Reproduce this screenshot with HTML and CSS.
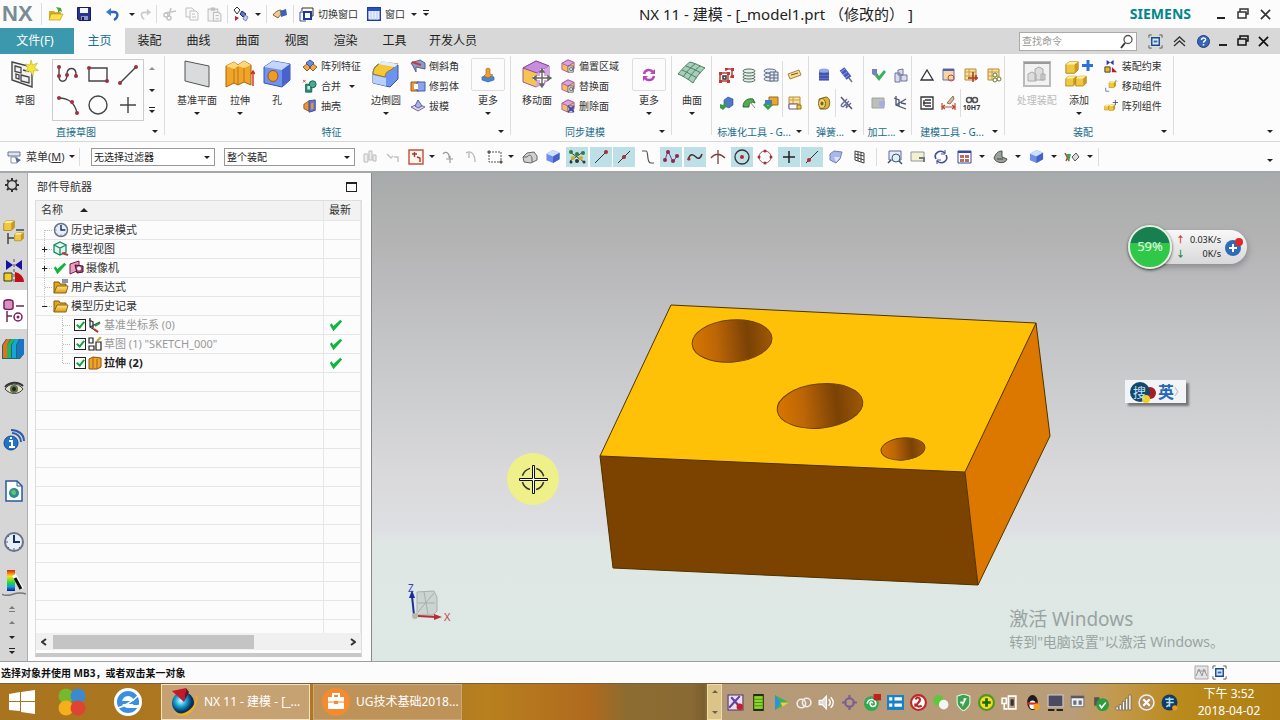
FILE: index.html
```html
<!DOCTYPE html>
<html lang="zh-CN">
<head>
<meta charset="utf-8">
<title>NX 11 - 建模</title>
<link rel="stylesheet" href="styles.css">
</head>
<body>
<svg class="defs" width="0" height="0" aria-hidden="true">
  <defs>
    <linearGradient id="gHole" x1="0" x2="1" y1="0" y2="0"><stop offset="0" stop-color="#d87600"/><stop offset=".3" stop-color="#bd6606"/><stop offset=".6" stop-color="#8a4a06"/><stop offset=".7" stop-color="#7a4204"/><stop offset="1" stop-color="#a05806"/></linearGradient>
    <linearGradient id="gFolder" x1="0" x2="0" y1="0" y2="1"><stop offset="0" stop-color="#ffe680"/><stop offset="1" stop-color="#d99a18"/></linearGradient>
    <linearGradient id="gRain" x1="0" x2="0" y1="0" y2="1"><stop offset="0" stop-color="#e02010"/><stop offset=".3" stop-color="#f8e020"/><stop offset=".6" stop-color="#20d840"/><stop offset=".8" stop-color="#10a0d0"/><stop offset="1" stop-color="#1010b0"/></linearGradient>
    <radialGradient id="gNx" cx=".4" cy=".4"><stop offset="0" stop-color="#d8ffff"/><stop offset=".5" stop-color="#18a8d8"/><stop offset="1" stop-color="#043060"/></radialGradient>
  </defs>
  <symbol id="cube" viewBox="0 0 16 16"><path d="M1 5l7-4 7 3v7l-7 4-7-3z" fill="#6d8fe8"/><path d="M1 5l7-4 7 3-7 4z" fill="#cfe0ff"/><path d="M8 8l7-4v7l-7 4z" fill="#4560c8"/></symbol>
  <symbol id="ycube" viewBox="0 0 16 16"><path d="M1 4l4-3h10v9l-4 4H1z" fill="#f0c840" stroke="#a87c10"/><path d="M1 4l4-3h10l-4 3z" fill="#fff0a0"/><path d="M11 4l4-3v9l-4 4z" fill="#c89820"/></symbol>
  <symbol id="tick" viewBox="0 0 16 16"><path d="M1 8l4 7L15 4l-2-2-8 7-2-3z" fill="#12b53c"/></symbol>
  <symbol id="pface" viewBox="0 0 16 16"><path d="M1 5l7-4 7 3v7l-7 4-7-3z" fill="#f7b96a" stroke="#a65c9a"/><path d="M1 5l7-4 7 3-7 4z" fill="#d9a2de" stroke="#a65c9a"/><path d="M8 8h6v7H8z" fill="#fff" stroke="#555"/><path d="M10 10h3v3h-3z" fill="none" stroke="#555"/></symbol>
  <symbol id="clock" viewBox="0 0 22 22"><circle cx="11" cy="11" r="9" fill="#e8eef8" stroke="#6a7486" stroke-width="2"/><path d="M11 4v7h6" fill="none" stroke="#16305a" stroke-width="2"/><path d="M11 17v2M3 11h2M5 5l1 1M5 17l1-1M17 17l-1-1" stroke="#59657c"/></symbol>
  <symbol id="folder" viewBox="0 0 16 16"><path d="M1 14V3h5l1 2h6v3" fill="#e3a51c" stroke="#7c5a10"/><path d="M1 14l3-7h11l-2 7z" fill="url(#gFolder)" stroke="#8a6414"/></symbol>
  <symbol id="restore" viewBox="0 0 12 12"><path d="M3 4V1h8v5H9M1 4h8v6H1z" fill="none" stroke="currentColor" stroke-width="1.5"/></symbol>
  <symbol id="close" viewBox="0 0 12 12"><path d="M1 1l10 10M11 1L1 11" fill="none" stroke="currentColor" stroke-width="1.8"/></symbol>
  <symbol id="sheet" viewBox="0 0 16 16"><path d="M2 2h11v11H2z" fill="#fbe29a" stroke="#b58a3a"/><path d="M2 5h11M2 9h11M6 2v11" stroke="#c79c4e"/></symbol>
  <symbol id="fit" viewBox="0 0 16 16"><path d="M1 4V1h3M12 1h3v3M15 12v3h-3M4 15H1v-3" fill="none" stroke="#555"/><path d="M4 4h8v8H4z" fill="#d8e8fa" stroke="#174a88" stroke-width="1.5"/><path d="M6 7h4v2H6z" fill="#2f6db5"/></symbol>
</svg>

<header class="titlebar">
  <span class="logo">NX</span>
  <button class="ib w28" aria-label="打开"><svg width="16" height="16" viewBox="0 0 16 16"><path d="M1 13V5h5l1 1h6v7z" fill="#d9ab1f"/><path d="M3 8h12l-3 6H1z" fill="#ffe14d" stroke="#b48c10" stroke-width=".6"/><path d="M8 1l5 1 1 4-2-1-2 2V4z" fill="#48a53a"/></svg></button>
  <button class="ib w28" aria-label="保存"><svg width="14" height="14" viewBox="0 0 14 14"><path d="M.5.5h13v13H2L.5 12z" fill="#27358f" stroke="#141d5c"/><path d="M3 1h8v5H3z" fill="#f5f7ff"/><path d="M4 9h7v4H4z" fill="#8f97c0"/><path d="M5 10h2v3H5z" fill="#111a55"/></svg></button>
  <button class="ib w28" aria-label="撤消"><svg width="14" height="14" viewBox="0 0 14 14"><path d="M4 5h5c5 0 4 6 0 8" fill="none" stroke="#2f63b8" stroke-width="2.4"/><path d="M1 5l5-4v8z" fill="#2f7fd0"/></svg></button>
  <i class="caret"></i>
  <button class="ib w16" aria-label="重做" disabled><svg width="12" height="12" viewBox="0 0 14 14"><path d="M10 5H5C0 5 1 11 5 13" fill="none" stroke="#ccc" stroke-width="2"/><path d="M13 5L8 1v8z" fill="#ccc"/></svg></button>
  <i class="sep"></i>
  <button class="ib w22" aria-label="剪切" disabled><svg width="14" height="14" viewBox="0 0 14 14" fill="none" stroke="#c4c4c4" stroke-width="1.5"><path d="M8 1L6 9M2 6l11-2"/><circle cx="3" cy="8" r="2"/><circle cx="6" cy="11" r="2"/></svg></button>
  <button class="ib w22" aria-label="复制" disabled><svg width="14" height="14" viewBox="0 0 14 14" fill="#fafafa" stroke="#c0c0c0"><path d="M1 1h6l2 2v7H1z"/><path d="M5 4h6l2 2v7H5zM7 7h3M7 10h4"/></svg></button>
  <button class="ib w22" aria-label="粘贴" disabled><svg width="15" height="15" viewBox="0 0 14 14" fill="#f4f4f4" stroke="#c0c0c0"><path d="M1 2h9v11H1zM4 1h3v2H4z"/><path d="M6 5h5l2 2v6H6zM8 8h3M8 11h3"/></svg></button>
  <i class="sep"></i>
  <button class="ib w22" aria-label="最近命令"><svg width="16" height="16" viewBox="0 0 16 16"><path d="M4 1l3 3-3 4-3-4z" fill="#fff" stroke="#333"/><path d="M9 5l4 3-3 3-3-3z" fill="#5f6fd0" stroke="#222a7a"/><path d="M12 9l3 2-2 4-3-2z" fill="#c7d2f0" stroke="#7b88b8"/><path d="M2 10l4 2-4 3z" fill="#c8202a"/></svg></button>
  <i class="caret"></i>
  <i class="sep"></i>
  <button class="ib w22" aria-label="触控"><svg width="16" height="12" viewBox="0 0 16 12"><path d="M1 7c2-3 5-5 8-5l1 3-4 5z" fill="#f2c888" stroke="#8c6434"/><path d="M8 3l6-2 1 6-6 2z" fill="#3a62b4"/></svg></button>
  <i class="sep"></i>
  <button class="tb"><svg width="15" height="15" viewBox="0 0 15 15" fill="#fff"><path d="M3 4V1h11v8h-2" stroke="#333"/><path d="M1 5h6M1 5v9h6" stroke="#3a4bb0" fill="none"/><path d="M5 5h7v7H5z" stroke="#1c3c9c" stroke-width="2"/></svg>切换窗口</button>
  <button class="tb"><svg width="14" height="14" viewBox="0 0 14 14"><path d="M.7.7h12.6v12.6H.7z" fill="#e8f0ff" stroke="#1c3ca8" stroke-width="1.4"/><path d="M1 1h12v3H1z" fill="#2a52c8"/><path d="M4 4v9M7 4v9M10 4v9" stroke="#b5c6ec"/></svg>窗口</button>
  <i class="caret"></i><i class="caret bar"></i>
  <h1 class="doc-title">NX 11 - 建模 - [_model1.prt （修改的） ]</h1>
  <span class="brand">SIEMENS</span>
  <span class="winbtns">
    <button class="ib w22" aria-label="最小化"><i class="min"></i></button>
    <button class="ib w22" aria-label="还原"><svg width="12" height="12"><use href="#restore"/></svg></button>
    <button class="ib w22" aria-label="关闭"><svg width="11" height="11"><use href="#close"/></svg></button>
  </span>
</header>

<nav class="tabs">
  <button class="tab file">文件(F)</button>
  <button class="tab on">主页</button>
  <button class="tab">装配</button>
  <button class="tab">曲线</button>
  <button class="tab">曲面</button>
  <button class="tab">视图</button>
  <button class="tab">渲染</button>
  <button class="tab">工具</button>
  <button class="tab wide">开发人员</button>
  <label class="search"><input type="text" placeholder="查找命令" aria-label="查找命令"><svg width="15" height="15" viewBox="0 0 15 15" fill="none"><circle cx="9" cy="5.500" r="4" stroke="#555" stroke-width="1.300"/><path d="M6 9l-4 5" stroke="#333" stroke-width="2"/></svg></label>
  <span class="tabicons">
    <button class="ib w24" aria-label="全屏"><svg width="15" height="15"><use href="#fit"/></svg></button>
    <button class="ib w24" aria-label="折叠功能区"><svg width="13" height="11" viewBox="0 0 13 11" fill="none" stroke="#333" stroke-width="1.300"><path d="M1 6l5.500-5L12 6M1 10l5.500-5L12 10"/></svg></button>
    <button class="ib w24" aria-label="帮助"><svg width="13" height="13" viewBox="0 0 13 13"><circle cx="6.500" cy="6.500" r="6" fill="#3566b8" stroke="#1d3f80"/><path d="M4.500 5c0-3 4.500-2.500 4 0-.4 1.200-2 1.300-2 2.800M6.500 9v1.500" fill="none" stroke="#fff" stroke-width="1.500"/></svg></button>
    <button class="ib w16" aria-label="最小化文档"><i class="min"></i></button>
    <button class="ib w24" aria-label="还原文档"><svg width="12" height="12"><use href="#restore"/></svg></button>
    <button class="ib w16" aria-label="关闭文档"><svg width="11" height="11"><use href="#close"/></svg></button>
  </span>
</nav>

<section class="ribbon">
  <div class="group g1">
    <div class="tools">
      <button class="big"><svg width="28" height="28" viewBox="0 0 28 28"><path d="M1 2l20 5v20L1 20z" fill="#f2f2f2" stroke="#444" stroke-width="1.400"/><path d="M4 6l6 1.500V13l-6-1.500zM12 10l6 1.500M5 14l3 1v4l-3-1zM10 15l8 2v6l-8-2z" fill="none" stroke="#444" stroke-width="1.300"/><path d="M20 0l1.500 5 5-2-3 4.500 4 3-5 .5L22 16l-3-5-5 1 3-4-3-4 5 1z" fill="#f4e53c" stroke="#b8b020" stroke-width=".6"/></svg><span>草图</span></button>
      <div class="gallery">
        <button aria-label="轮廓"><svg width="22" height="22" viewBox="0 0 22 22"><path d="M2 3v9c0 7 7 7 8 0V9c1-6 8-6 9 0v3" fill="none" stroke="#444" stroke-width="1.400"/><circle cx="2" cy="3" r="2" fill="#a03040"/><circle cx="2" cy="12" r="2" fill="#a03040"/><circle cx="10" cy="11" r="2" fill="#a03040"/><circle cx="19" cy="12" r="2" fill="#a03040"/></svg></button>
        <button aria-label="矩形"><svg width="22" height="22" viewBox="0 0 22 22"><path d="M2 4h18v13H2z" fill="none" stroke="#444" stroke-width="1.400"/><circle cx="2" cy="4" r="2" fill="#a03040"/><circle cx="20" cy="17" r="2" fill="#a03040"/></svg></button>
        <button aria-label="直线"><svg width="22" height="22" viewBox="0 0 22 22"><path d="M3 19L19 3" stroke="#444" stroke-width="1.400"/><circle cx="3" cy="19" r="2" fill="#a03040"/><circle cx="19" cy="3" r="2" fill="#a03040"/></svg></button>
        <button aria-label="圆弧"><svg width="22" height="22" viewBox="0 0 22 22"><path d="M2 4c9 0 16 5 18 15" fill="none" stroke="#444" stroke-width="1.400"/><circle cx="2" cy="4" r="2" fill="#a03040"/><circle cx="15" cy="8" r="2" fill="#a03040"/><circle cx="20" cy="19" r="2" fill="#a03040"/></svg></button>
        <button aria-label="圆"><svg width="22" height="22" viewBox="0 0 22 22"><circle cx="11" cy="11" r="9" fill="none" stroke="#444" stroke-width="1.400"/></svg></button>
        <button aria-label="点"><svg width="22" height="22" viewBox="0 0 22 22"><path d="M11 3v16M3 11h16" stroke="#444" stroke-width="1.400"/></svg></button>
      </div>
      <div class="scroll"><i class="caret up dim"></i><i class="caret"></i><i class="caret bar"></i></div>
    </div>
    <footer><span>直接草图</span><i class="caret"></i></footer>
  </div>

  <div class="group g2">
    <div class="tools">
      <button class="big w46"><svg width="28" height="28" viewBox="0 0 28 28"><path d="M2 1l24 5v21L2 21z" fill="#d9dcdc" stroke="#555"/></svg><span>基准平面</span><i class="caret"></i></button>
      <button class="big w40"><svg width="30" height="28" viewBox="0 0 30 28"><path d="M1 6l8-4 4 3 6-4 7 4v20l-7-3-6 3-4-2-8 4z" fill="#f0a428" stroke="#a86410"/><path d="M1 6l8-4 4 3 6-4 7 4-7 3-6-2-4 3z" fill="#ffd878"/><path d="M9 9v15M13 7v18M19 8v14" stroke="#b87818"/><path d="M28 26V12M26 14l2-3 2 3" fill="none" stroke="#d03018" stroke-width="1.400"/></svg><span>拉伸</span><i class="caret"></i></button>
      <button class="big w34"><svg width="28" height="28" viewBox="0 0 28 28"><path d="M1 7l9-6 17 3v16l-8 7-18-4z" fill="#6f92ee" stroke="#3c52a8"/><path d="M1 7l9-6 17 3-8 6z" fill="#c2d6ff"/><path d="M19 10l8-6v16l-8 7z" fill="#4a62cc"/><ellipse cx="10" cy="16" rx="5" ry="5.500" fill="#f09a28" stroke="#9c5810"/></svg><span>孔</span></button>
      <div class="stack">
        <button><svg width="16" height="14" viewBox="0 0 16 14"><path d="M1 8l4-3 4 3-4 4zM7 8l4-3 4 3-4 4z" fill="#f0a848" stroke="#995c1c"/><path d="M4 4l4-3 4 3-4 4z" fill="#6a8be0" stroke="#3b529c"/></svg>阵列特征</button>
        <button><svg width="16" height="16" viewBox="0 0 16 16"><path d="M3 6h7v9H3z" fill="#2f8f78" stroke="#145c4a"/><circle cx="11" cy="6" r="4" fill="#46ab90" stroke="#145c4a"/><path d="M5 8h3v4H5z" fill="#c8efe2"/><path d="M0 1l3 3M3 1L0 4" stroke="#d03030"/></svg>合并<i class="caret"></i></button>
        <button><svg width="16" height="16" viewBox="0 0 16 16"><path d="M1 6l6-4v12l-6-3z" fill="#e8943c" stroke="#9c5414"/><path d="M7 2l7-1v12l-7 2z" fill="#5a78d8" stroke="#34489c"/><path d="M9 5l3-1v7l-3 1z" fill="#e8943c"/></svg>抽壳</button>
      </div>
      <button class="big w36"><svg width="28" height="28" viewBox="0 0 28 28"><path d="M1 14c0-7 4-9 9-12l16 3v14l-8 8-17-4z" fill="#6f92ee" stroke="#3c52a8"/><path d="M10 2l16 2-7 6c-4 1-6 4-6 7L1 14C1 8 5 5 10 2z" fill="#f4c838" stroke="#9b7a18"/><path d="M10 1l16 3-3 3L6 4z" fill="#e0ecff"/><path d="M1 15l13 3v8L1 23z" fill="#b8d0ff"/></svg><span>边倒圆</span><i class="caret"></i></button>
      <div class="stack s54">
        <button><svg width="16" height="14" viewBox="0 0 16 14"><path d="M1 4l9-3 5 3v6L6 8v5L3 7z" fill="#8a9ccc" stroke="#565f80"/><path d="M2 3l9 3" stroke="#c43c3c" stroke-width="2"/></svg>倒斜角</button>
        <button><svg width="16" height="14" viewBox="0 0 16 14"><path d="M1 3h8v9H1z" fill="#e8983c" stroke="#9a5818"/><path d="M7 3h8v9H7z" fill="#8aa4e8" stroke="#475ca8"/><path d="M4 5h4v5H4z" fill="#fff"/></svg>修剪体</button>
        <button><svg width="16" height="14" viewBox="0 0 16 14"><path d="M1 8l7-3 7 3-7 4z" fill="#f0cce8" stroke="#6e6e9c"/><path d="M5 7l3-6 4 6-4 2z" fill="#a6b4e8" stroke="#56629c"/></svg>拔模</button>
      </div>
      <button class="big more"><span class="box"><svg width="16" height="16" viewBox="0 0 16 16"><path d="M2 10l5-2 7 2v3l-6 2-6-2z" fill="#4a86d0" stroke="#2c5c9c" stroke-width=".6"/><path d="M6 2l2-1 2 1v5l3 1-5 3-4-2 2-2z" fill="#f0a030" stroke="#a06010" stroke-width=".6"/></svg></span><span>更多</span><i class="caret"></i></button>
    </div>
    <footer><span>特征</span><i class="caret"></i></footer>
  </div>

  <div class="group g3">
    <div class="tools">
      <button class="big w46"><svg width="30" height="28" viewBox="0 0 30 28"><path d="M1 8l13-7 13 5v14l-13 7L1 22z" fill="#f6c450" stroke="#9a5c90"/><path d="M1 8l13-7 13 5-12 7z" fill="#c88ce0" stroke="#8a4c9c"/><path d="M15 13l12-7v14l-13 7z" fill="#d8a4e4"/><path d="M20 9v18M11 18h18" stroke="#fff" stroke-width="4"/><path d="M20 9v18M11 18h18M20 9l-2 3h4zM20 27l-2-3h4zM11 18l3-2v4zM29 18l-3-2v4z" fill="#666" stroke="#666" stroke-width="1.400"/></svg><span>移动面</span></button>
      <div class="stack s66">
        <button><svg width="16" height="14"><use href="#pface"/></svg>偏置区域</button>
        <button><svg width="16" height="14"><use href="#pface"/></svg>替换面</button>
        <button><svg width="16" height="14" viewBox="0 0 16 14"><use href="#pface" width="16" height="14"/><path d="M8 7l6 6M14 7l-6 6" stroke="#3a46b8" stroke-width="1.500"/></svg>删除面</button>
      </div>
      <button class="big more"><span class="box"><svg width="16" height="16" viewBox="0 0 16 16" fill="none" stroke="#b44ab8" stroke-width="2.400"><path d="M3 7c1-5 7-5 9-2M13 9c-1 5-7 5-9 2"/><path d="M14 2v5H9zM2 14V9h5z" fill="#b44ab8" stroke="none"/></svg></span><span>更多</span><i class="caret"></i></button>
    </div>
    <footer><span>同步建模</span><i class="caret"></i></footer>
  </div>

  <div class="group g4">
    <div class="tools">
      <button class="big w40"><svg width="30" height="28" viewBox="0 0 30 28"><path d="M1 14C6 8 10 4 13 2c5 1 10 4 15 6-4 3-8 8-12 15C11 19 6 16 1 14z" fill="#a5cfb8" stroke="#507c66"/><path d="M5 10c5 2 10 5 15 8M9 6c5 2 10 4 15 7M6 17C10 11 14 7 18 4M11 20c4-7 8-11 12-14" fill="none" stroke="#507c66"/></svg><span>曲面</span><i class="caret"></i></button>
    </div>
  </div>

  <div class="group g5">
    <div class="tools grid4">
      <button aria-label="标准件"><svg width="16" height="16" viewBox="0 0 16 16" fill="none" stroke="#c03838" stroke-width="1.500"><path d="M1 6h8v8H1z"/><path d="M4 9h3v3H4z" stroke="#333"/><path d="M7 4V2h6v8h-2" stroke="#a84848"/><g fill="#c03838" stroke="none"><path d="M0 5h3v3H0zM8 5h3v3H8zM0 13h3v3H0zM8 13h3v3H8zM6 1h3v2H6zM12 1h3v3h-3zM12 8h3v3h-3z"/></g></svg></button>
      <button aria-label="图层"><svg width="16" height="16" viewBox="0 0 16 16" fill="#e6efe8" stroke="#4b6b5a"><ellipse cx="8" cy="13" rx="6" ry="2"/><ellipse cx="8" cy="10" rx="6" ry="2"/><ellipse cx="8" cy="7" rx="6" ry="2"/><ellipse cx="8" cy="4" rx="6" ry="2"/></svg></button>
      <button aria-label="图层表"><svg width="16" height="16" viewBox="0 0 16 16" fill="#e6ecf4" stroke="#5a6684"><ellipse cx="7" cy="12" rx="6" ry="2"/><ellipse cx="7" cy="8" rx="6" ry="2"/><ellipse cx="7" cy="4" rx="6" ry="2"/><path d="M7 5h8v9H7zM7 8h8M7 11h8M11 5v9"/></svg></button>
      <button class="split" aria-label="标签"><svg width="16" height="14" viewBox="0 0 16 14"><path d="M1 6l11-4 2 5-11 4z" fill="#f8dc94" stroke="#a8823c"/><path d="M4 7l7-2" stroke="#735420"/></svg></button>
      <button aria-label="导入"><svg width="16" height="16" viewBox="0 0 16 16"><path d="M5 5l4-3 5 2v6l-4 3-5-2z" fill="#4d78c8" stroke="#2c4c90" stroke-width=".6"/><path d="M1 9l3 1 3-3 1 4-4 4-3-2z" fill="#3b9a48"/></svg></button>
      <button aria-label="更新"><svg width="16" height="16" viewBox="0 0 16 16"><path d="M2 12c0-7 6-9 10-8l2 4c-4-2-6 0-6 4z" fill="#54ac50" stroke="#2b6b2b"/><path d="M9 7l5 6" stroke="#888"/></svg></button>
      <button aria-label="转换"><svg width="16" height="16" viewBox="0 0 16 16"><path d="M6 2h9v8H6z" fill="#e8a830" stroke="#9c6a18"/><path d="M2 5h7v5H2z" fill="#4a7ac0"/><path d="M1 9l4 4 4-4" stroke="#38a048" fill="none" stroke-width="3"/></svg></button>
      <button class="split" aria-label="属性"><svg width="16" height="16" viewBox="0 0 16 16"><use href="#sheet"/><path d="M2 9h9v5H2z" fill="#fff" stroke="#6c5088"/><path d="M10 10h4v4h-4z" fill="#f2c440" stroke="#93731c"/></svg></button>
    </div>
    <footer><span>标准化工具 - G...</span><i class="caret"></i></footer>
  </div>

  <div class="group g6">
    <div class="tools grid2">
      <button aria-label="圆柱弹簧"><svg width="14" height="14" viewBox="0 0 14 14"><path d="M2 2h10v10H2z" fill="#5c70c8"/><ellipse cx="7" cy="2.500" rx="5" ry="2" fill="#96a8ea"/><path d="M2 6h10M2 9h10M2 12h10" stroke="#2c3c90"/></svg></button>
      <button aria-label="拉伸弹簧"><svg width="16" height="16" viewBox="0 0 16 16"><path d="M4 2l7 9" stroke="#4a5cc0" stroke-width="6"/><path d="M3 5l4-3M5 8l4-3M7 11l4-3" stroke="#8c9ce4"/><path d="M11 11l3 4" stroke="#777" stroke-width="1.500"/></svg></button>
      <button aria-label="碟簧"><svg width="14" height="14" viewBox="0 0 14 14"><path d="M2 3l7-2c5 0 5 11 0 12H3z" fill="#d8b43c" stroke="#7c641c"/><ellipse cx="5" cy="7.500" rx="3.500" ry="5" fill="#f0d468" stroke="#7c641c"/><ellipse cx="5" cy="7.500" rx="1.500" ry="2" fill="#75601c"/></svg></button>
      <button class="split" aria-label="删除弹簧"><svg width="16" height="16" viewBox="0 0 16 16" fill="none"><path d="M2 2l11 12" stroke="#555" stroke-width="1.500"/><path d="M3 9l5-5M5 11l5-5M7 13l5-5M3 9c-2 2 1 4 2 2s4-1 2 2" stroke="#6a6ea8" stroke-width="1.500"/></svg></button>
    </div>
    <footer><span>弹簧...</span><i class="caret"></i></footer>
  </div>

  <div class="group g7">
    <div class="tools grid2">
      <button aria-label="检查"><svg width="16" height="16" viewBox="0 0 16 16"><path d="M1 2h5v5l-2 2-3-2z" fill="#7a7ec0"/><path d="M4 9l4 5 7-9-2-2-5 6-2-3z" fill="#3cb05c"/></svg></button>
      <button aria-label="加工设置"><svg width="16" height="16" viewBox="0 0 16 16" fill="#d8dcec" stroke="#70749c"><path d="M2 6h5v9H2zM5 3l5-1v6H5zM8 8h6v6H8z"/></svg></button>
      <button aria-label="毛坯"><svg width="16" height="16" viewBox="0 0 16 16"><path d="M1 3h12v10H1z" fill="#bcc0b8" stroke="#a0a49c"/><path d="M8 6h6v4l-3 3-3-3z" fill="#a8aaea"/></svg></button>
      <button aria-label="坐标"><svg width="16" height="16" viewBox="0 0 16 16" fill="none" stroke="#4c5870" stroke-width="1.300"><path d="M3 1v9l10 4M3 10l10-6M1 3l5 2v6M8 8l5 1"/></svg></button>
    </div>
    <footer><span>加工...</span><i class="caret"></i></footer>
  </div>

  <div class="group g8">
    <div class="tools grid4">
      <button aria-label="三角"><svg width="14" height="14" viewBox="0 0 14 14"><path d="M7 2l6 10H1z" fill="none" stroke="#333" stroke-width="1.300"/></svg></button>
      <button aria-label="表格"><svg width="14" height="14" viewBox="0 0 14 14"><path d="M1 1h11v11H1z" fill="#f4d8a4" stroke="#6c6ca8"/><path d="M1 2h11" stroke="#5860b0" stroke-width="2"/><circle cx="9" cy="10" r="3" fill="none" stroke="#c44c3c"/></svg></button>
      <button aria-label="插入列"><svg width="16" height="16" viewBox="0 0 16 16"><use href="#sheet"/><path d="M10 5v10M5 11h10M13 8v5" stroke="#a83828" stroke-width="1.500"/></svg></button>
      <button aria-label="编辑表"><svg width="16" height="16" viewBox="0 0 16 16"><use href="#sheet"/><g fill="#fff" stroke="#667a38"><circle cx="9" cy="8" r="2"/><circle cx="13" cy="12" r="2"/><circle cx="9" cy="13" r="2"/></g></svg></button>
      <button aria-label="公差框"><svg width="14" height="14" viewBox="0 0 14 14" fill="none" stroke="#333" stroke-width="1.300"><path d="M1 1h12v12H1zM5 4h6M3 7h8M5 10h6M4 4v6"/></svg></button>
      <button aria-label="尺寸"><svg width="16" height="16" viewBox="0 0 16 16"><path d="M6 8l6-7 1 3-4 5z" fill="#d6bc98" stroke="#8a7458"/><path d="M1 8v7M14 8v7M1 12h13M4 10l-3 2 3 2M11 10l3 2-3 2" fill="none" stroke="#c44638" stroke-width="1.200"/></svg></button>
      <button class="split h7" aria-label="配合"><svg width="14" height="8" viewBox="0 0 14 8" fill="none" stroke="#555" stroke-width="1.500"><circle cx="4" cy="4" r="2.500"/><circle cx="10" cy="4" r="2.500"/><path d="M6 1l3 6"/></svg><b>10H7</b></button>
    </div>
    <footer><span>建模工具 - G...</span><i class="caret"></i></footer>
  </div>

  <div class="group g9">
    <div class="tools">
      <button class="big w46" disabled><svg width="28" height="28" viewBox="0 0 28 28"><path d="M1 2h26v24H1z" fill="#f2f2f2" stroke="#bbb" stroke-width="2"/><path d="M1 3h26" stroke="#999" stroke-width="2"/><path d="M5 14l4-2 4 2v7H5zM12 9l4-2 4 2v11h-8zM18 14h4v6h-4z" fill="#ddd" stroke="#aaa"/></svg><span>处理装配</span></button>
      <button class="big w40"><svg width="28" height="28" viewBox="0 0 28 28"><use href="#ycube" width="14" height="14" y="1"/><use href="#ycube" width="12" height="13" y="15"/><use href="#ycube" width="12" height="13" x="10" y="15"/><path d="M23 0v11M17 5.500h11" stroke="#2b72d8" stroke-width="3"/></svg><span>添加</span><i class="caret"></i></button>
      <div class="stack s66 last">
        <button><svg width="16" height="16" viewBox="0 0 16 16"><path d="M3 1v6l4-3zM11 1v6L7 4z" fill="#3038b0"/><path d="M1 9h6v6H1z" fill="#e8b820" stroke="#333"/><path d="M9 9v6h6z" fill="#b81c28"/></svg>装配约束</button>
        <button><svg width="16" height="16" viewBox="0 0 16 16"><use href="#ycube" x="5" y="2" width="9" height="9"/><path d="M2 10v4h4M13 1l2 2" fill="none" stroke="#557bb4"/></svg>移动组件</button>
        <button><svg width="16" height="16" viewBox="0 0 16 16"><use href="#ycube" y="6" width="7" height="8"/><use href="#ycube" x="5" y="6" width="8" height="8"/><path d="M13 1v6M10 4h6" stroke="#3b4da0"/></svg>阵列组件</button>
      </div>
    </div>
    <footer><span>装配</span><i class="caret"></i></footer>
  </div>
  <div class="group gend"><footer><i class="caret"></i></footer></div>
</section>

<section class="selbar">
  <button class="tb menu"><svg width="16" height="16" viewBox="0 0 16 16"><path d="M1 3h12v4H1z" fill="#dfe5f0" stroke="#6b7590"/><path d="M4 8h6v6H4z" fill="#fff" stroke="#8a92a8"/><path d="M8 8l6 3-4 3z" fill="#5d6a90"/></svg><span>菜单(<u>M</u>)</span><i class="caret"></i></button>
  <i class="sep"></i>
  <span class="dd d1"><select aria-label="选择过滤器"><option>无选择过滤器</option></select><i class="caret"></i></span>
  <span class="dd d2"><select aria-label="选择范围"><option>整个装配</option></select><i class="caret"></i></span>
  <span class="run first">
    <button aria-label="选择"><svg width="16" height="16" viewBox="0 0 16 16" fill="#eee" stroke="#bbb"><path d="M2 5h4v8H2zM7 2h3v9H7zM11 6h3v6h-3z"/></svg></button>
    <button aria-label="取消选择"><svg width="16" height="16" viewBox="0 0 16 16" fill="none" stroke="#c2c2c2" stroke-width="1.400"><path d="M2 5l4 4 2-2M9 8h4v5"/></svg></button>
    <button aria-label="选择优先"><svg width="16" height="16" viewBox="0 0 16 16" fill="none" stroke="#c0503c"><path d="M1 1h14v14H1z" fill="#fff4ee" stroke-width="1.400"/><path d="M4 5h5M6.500 3v5M9 8l3 1v4" stroke="#9c3c2c" stroke-width="1.400"/></svg></button>
    <i class="caret"></i>
    <button aria-label="移动"><svg width="16" height="16" viewBox="0 0 16 16" fill="none" stroke="#999" stroke-width="1.200"><path d="M2 5c3-4 7 0 6 4M5 10h7M9 7v7"/></svg></button>
    <button aria-label="路径"><svg width="16" height="16" viewBox="0 0 16 16" fill="none" stroke="#bbb" stroke-width="1.400"><path d="M2 4c5-3 9 1 9 9M5 4v5"/></svg></button>
    <button aria-label="框选"><svg width="16" height="16" viewBox="0 0 16 16" fill="none" stroke="#555"><path d="M2 3h12v10H2z" stroke-dasharray="2 1"/><path d="M1 2h2v2H1zM13 12h2v2h-2z" fill="#b44"/></svg></button>
    <i class="caret"></i>
  </span>
  <span class="run">
    <button aria-label="线框体"><svg width="16" height="16" viewBox="0 0 16 16" fill="#d0d0d0" stroke="#666"><path d="M1 8l4-4 7-1 3 4v4l-6 3-7-1z"/><path d="M5 8c2-3 5-2 5 2v3M5 8l-4 0"/></svg></button>
    <button aria-label="着色体"><svg width="16" height="15"><use href="#cube"/></svg></button>
  </span>
  <span class="run"><button class="hot" aria-label="启用捕捉点"><svg width="18" height="16" viewBox="0 0 18 16"><path d="M2 3l14 10M2 12L15 3" stroke="#444"/><g fill="#2d7c40"><circle cx="3" cy="3" r="2"/><circle cx="9" cy="5" r="2"/><circle cx="15" cy="4" r="2"/></g><g fill="#d0b020"><circle cx="5" cy="9" r="2"/><circle cx="13" cy="9" r="2"/></g><g fill="#333"><circle cx="3" cy="13" r="1.500"/><circle cx="9" cy="12" r="2"/><circle cx="16" cy="13" r="1.500"/></g></svg></button></span>
  <span class="run"><button class="hot" aria-label="端点"><svg width="16" height="16" viewBox="0 0 16 16"><path d="M2 14L13 3" stroke="#333"/><circle cx="13" cy="3" r="2" fill="#b02838"/></svg></button><button class="hot" aria-label="中点"><svg width="16" height="16" viewBox="0 0 16 16"><path d="M2 14L14 2" stroke="#333"/><circle cx="8" cy="8" r="2" fill="#b02838"/></svg></button></span>
  <span class="run"><button aria-label="控制点"><svg width="16" height="16" viewBox="0 0 16 16"><path d="M2 2h4c3 0 0 12 5 12h3" fill="none" stroke="#555" stroke-width="1.200"/></svg></button><button class="hot" aria-label="极点"><svg width="16" height="16" viewBox="0 0 16 16"><path d="M2 11l3-9 5 11 4-6" fill="none" stroke="#7a3c88"/><g fill="#8a2850"><circle cx="2" cy="11" r="2"/><circle cx="5" cy="3" r="2"/><circle cx="10" cy="12" r="2"/><circle cx="14" cy="7" r="2"/></g></svg></button></span>
  <span class="run"><button class="hot" aria-label="样条点"><svg width="16" height="16" viewBox="0 0 16 16"><path d="M1 11C3 4 6 5 9 8s5 0 6-3" fill="none" stroke="#443038" stroke-width="1.600"/><circle cx="2" cy="10" r="1.500" fill="#b02838"/></svg></button><button aria-label="交点"><svg width="16" height="16" viewBox="0 0 16 16"><path d="M1 9c4-5 9-5 14 0M8 1v14" fill="none" stroke="#7a4444" stroke-width="1.300"/></svg></button></span>
  <span class="run"><button class="hot" aria-label="圆心"><svg width="16" height="16" viewBox="0 0 16 16"><circle cx="8" cy="8" r="7" fill="none" stroke="#333" stroke-width="1.300"/><circle cx="8" cy="8" r="2" fill="#b02838"/></svg></button><button aria-label="象限点"><svg width="16" height="16" viewBox="0 0 16 16"><circle cx="8" cy="8" r="6" fill="none" stroke="#955"/><g fill="#b02838"><circle cx="8" cy="2" r="1.500"/><circle cx="14" cy="8" r="1.500"/><circle cx="8" cy="14" r="1.500"/><circle cx="2" cy="8" r="1.500"/></g></svg></button></span>
  <span class="run"><button class="hot" aria-label="现有点"><svg width="16" height="16" viewBox="0 0 16 16"><path d="M8 2v12M2 8h12" stroke="#222" stroke-width="1.500"/></svg></button><button class="hot" aria-label="曲线上的点"><svg width="16" height="16" viewBox="0 0 16 16"><path d="M2 14L14 2" stroke="#333"/><circle cx="5" cy="11" r="2" fill="#b02838"/></svg></button></span>
  <span class="run"><button aria-label="面上的点"><svg width="16" height="16" viewBox="0 0 16 16"><path d="M2 5l4-3 8 1-2 7-4 4-6-3z" fill="#aab8e8" stroke="#7280b4"/><path d="M6 8h6l-4 5z" fill="#dde4fa"/></svg></button><button aria-label="栅格点"><svg width="14" height="14" viewBox="0 0 14 14" fill="none" stroke="#444"><path d="M3 1l9 2v10l-9-3zM6 2v9M9 2v10M3 4l9 2M3 7l9 3"/></svg></button></span>
  <i class="sep gap"></i>
  <span class="run">
    <button aria-label="适合窗口"><svg width="16" height="16" viewBox="0 0 16 16"><path d="M2 2h12v9H2z" fill="#e8ecf8" stroke="#5868a0"/><circle cx="9" cy="9" r="4" fill="#dff0f8" stroke="#456"/><path d="M1 14l3-3M12 12l3 3" stroke="#456" stroke-width="1.500"/></svg></button>
    <button aria-label="缩放"><svg width="16" height="14" viewBox="0 0 16 14"><path d="M1 2h13v9H1z" fill="#f4f2cc" stroke="#9097a0"/><path d="M9 8h5v4" fill="none" stroke="#778" stroke-width="2"/></svg></button>
    <button aria-label="旋转"><svg width="16" height="16" viewBox="0 0 16 16" fill="none" stroke="#434f94" stroke-width="1.600"><path d="M3 10C0 4 7 0 12 4M13 6c3 6-4 10-9 6"/><path d="M12 1v4H8M4 15v-4h4" stroke-width="1"/></svg></button>
    <button aria-label="布局"><svg width="15" height="14" viewBox="0 0 15 14"><path d="M1 1h13v12H1z" fill="#fff" stroke="#334a9a"/><path d="M1 2h13" stroke="#334a9a" stroke-width="2"/><path d="M3 5h4v3H3zM8 5h4v3H8zM3 9h4v3H3zM8 9h4v3H8z" fill="#ba6a64"/></svg></button>
    <i class="caret c12"></i>
    <button aria-label="渲染样式"><svg width="16" height="16" viewBox="0 0 16 16"><path d="M2 9c2-5 4-7 8-7v6l5 2c-1 5-11 5-13-1z" fill="#9aa09a" stroke="#4d524d"/><path d="M5 10h6" stroke="#444"/></svg></button>
    <i class="caret c12"></i>
    <button aria-label="视图方向"><svg width="15" height="15"><use href="#cube"/></svg></button>
    <i class="caret c12"></i>
    <button aria-label="剖切"><svg width="16" height="14" viewBox="0 0 16 14"><path d="M1 3l4 8M2 11l3-7" stroke="#c03a3a" stroke-width="1.400"/><path d="M2 4l3 8 2-8" fill="#48a050"/><path d="M8 7l4-4 3 4-4 4z" fill="#ddd" stroke="#555"/></svg></button>
    <i class="caret c12"></i>
  </span>
  <i class="sep"></i>
  <i class="caret end"></i>
</section>

<main class="work">
  <aside class="rail">
    <button class="gear" aria-label="资源条选项"><svg width="14" height="14" viewBox="0 0 14 14"><path d="M7 0v14M0 7h14M2 2l10 10M12 2L2 12" stroke="#333" stroke-width="2"/><circle cx="7" cy="7" r="4.500" fill="#d6d6d6" stroke="#333" stroke-width="1.500"/></svg></button>
    <button aria-label="装配导航器"><svg width="22" height="24" viewBox="0 0 22 24"><use href="#ycube" width="12" height="12"/><use href="#ycube" x="11" y="12" width="10" height="10"/><path d="M5 13v11M5 18h6M13 10h8" fill="none" stroke="#444" stroke-width="1.500"/></svg></button>
    <button aria-label="约束导航器"><svg width="22" height="24" viewBox="0 0 22 24"><path d="M3 1v10l7-5zM19 1v10l-7-5z" fill="#1414a0"/><path d="M1 14h8v8H1z" fill="#f2d020" stroke="#333"/><path d="M12 13v10h9c0-5-4-9-9-10z" fill="#c01018"/><path d="M11 0v24" stroke="#555" stroke-dasharray="3 2"/></svg></button>
    <button class="on" aria-label="部件导航器"><svg width="22" height="24" viewBox="0 0 22 24"><path d="M1 4c0-3 9-3 9 0v6c0 2-9 2-9 0z" fill="#d894c0" stroke="#7c1c60" stroke-width="1.500"/><path d="M4 13v11M4 18h5M13 8h8" stroke="#603058" stroke-width="1.500"/><circle cx="15" cy="19" r="4" fill="#fff" stroke="#7c1c60" stroke-width="1.500"/><circle cx="15" cy="19" r="1.500" fill="#7c1c60"/></svg></button>
    <button aria-label="重用库"><svg width="23" height="22" viewBox="0 0 23 22"><path d="M0 7l4-6h18v15l-4 5H0z" fill="#1a6d6c"/><path d="M1 7l4-6h3L5 7v13H1z" fill="#f26a18"/><path d="M5 7l4-6h4l-4 6v13H5z" fill="#1db85c"/><path d="M10 7l3-6h4l-3 6v13h-4z" fill="#18a4d8"/><path d="M15 7l3-6h4v15l-4 4h-3z" fill="#1b74c4"/></svg></button>
    <button aria-label="视图管理器"><svg width="20" height="14" viewBox="0 0 20 14"><path d="M1 8c4-6 13-7 18 0-4 6-13 6-18 0z" fill="#e0dcc8" stroke="#444"/><circle cx="10" cy="8" r="4" fill="#5a7040"/><circle cx="10" cy="8" r="2" fill="#222"/><path d="M1 6C5 1 14 0 19 5" fill="none" stroke="#333" stroke-width="2"/></svg></button>
    <button class="tall" aria-label="信息"><svg width="22" height="22" viewBox="0 0 22 22"><circle cx="8" cy="14" r="7" fill="#2272c8" stroke="#114a90"/><path d="M6 12h3v6M6 18h6M7 9h2" fill="none" stroke="#fff" stroke-width="2"/><path d="M9 4c5 0 9 4 9 9M8 1c7 0 13 4 13 11" fill="none" stroke="#2c5ca8" stroke-width="2"/></svg></button>
    <button class="tall" aria-label="网页浏览器"><svg width="18" height="22" viewBox="0 0 18 22"><path d="M1 1h11l5 5v15H1z" fill="#fff" stroke="#2a5a9c" stroke-width="1.500"/><path d="M12 1v5h5" fill="none" stroke="#2a5a9c"/><circle cx="9" cy="13" r="5" fill="#2a8a98"/><path d="M6 12c2-4 5-2 5 1s-4 3-5-1z" fill="#5cc46a"/></svg></button>
    <button class="tall" aria-label="历史记录"><svg width="22" height="22"><use href="#clock"/></svg></button>
    <button class="role" aria-label="角色"><svg width="24" height="30" viewBox="0 0 24 30"><path d="M5 1h8v21H5z" fill="url(#gRain)"/><path d="M12 6l8 14" stroke="#fff" stroke-width="4"/><path d="M13 9l6 11" stroke="#111" stroke-width="3"/><path d="M0 25c6 5 13-4 24 0" fill="none" stroke="#777" stroke-width="1.500"/></svg></button>
    <i class="caret up dim bar"></i><i class="caret up dim"></i><i class="caret"></i><i class="caret bar"></i>
  </aside>

  <section class="panel">
    <header><h2>部件导航器</h2><button class="ib w16" aria-label="最大化"><i class="max"></i></button></header>
    <div class="tree">
      <div class="rows">
      <table>
        <colgroup><col><col class="c2"></colgroup>
        <thead><tr><th>名称<i class="caret up"></i></th><th>最新</th></tr></thead>
        <tbody>
          <tr><td><div class="node"><svg class="br" width="17" height="18"><path d="M8.500 9v9M9 9.500h8"/></svg><svg width="16" height="16"><use href="#clock"/></svg>历史记录模式</div></td><td></td></tr>
          <tr><td><div class="node"><svg class="br" width="17" height="18"><path d="M8.500 0v18M9 9.500h8"/><path class="pm" d="M6 9.500h5M8.500 7v5"/></svg><svg width="16" height="16" viewBox="0 0 16 16"><path d="M7 1l6 3v7l-6 3-6-3V4zM1 4l6 3 6-3M7 7v7" fill="#dff5ec" stroke="#128a60" stroke-width="1.300"/><path d="M9 12l6 2" stroke="#b34" stroke-width="2"/></svg>模型视图</div></td><td></td></tr>
          <tr><td><div class="node"><svg class="br" width="17" height="18"><path d="M8.500 0v18M9 9.500h8"/><path class="pm" d="M6 9.500h5M8.500 7v5"/></svg><svg width="14" height="14"><use href="#tick"/></svg><svg width="15" height="15" viewBox="0 0 15 15"><path d="M1 4l9-3v9l-9 4z" fill="#e8a0c0" stroke="#7c1c40"/><path d="M6 5l8 1v6l-6 1z" fill="#a04878" stroke="#501030"/><circle cx="10" cy="8.500" r="2" fill="#fff"/></svg>摄像机</div></td><td></td></tr>
          <tr><td><div class="node"><svg class="br" width="17" height="18"><path d="M8.500 0v18M9 9.500h8"/></svg><svg width="16" height="16" viewBox="0 0 16 16"><use href="#folder"/><path d="M9 1h6M9 3h6" stroke="#226"/></svg>用户表达式</div></td><td></td></tr>
          <tr><td><div class="node"><svg class="br" width="17" height="18"><path d="M8.500 0v9M9 9.500h8"/><path class="pm" d="M6 9.500h5"/></svg><svg width="16" height="16"><use href="#folder"/></svg>模型历史记录</div></td><td></td></tr>
          <tr><td><div class="node dimmed"><svg class="br" width="35" height="18"><path d="M26.500 0v18M27 9.500h9"/></svg><input type="checkbox" checked aria-label="基准坐标系"><svg width="14" height="16" viewBox="0 0 14 16"><path d="M2 1v9l8 5M2 10l10-5M1 3l4 2v6" fill="none" stroke="#333" stroke-width="1.300"/><path d="M7 9l5-3" stroke="#1fa040" stroke-width="2"/><path d="M6 12l4 3" stroke="#c03030" stroke-width="2"/></svg>基准坐标系 (0)</div></td><td><svg width="14" height="14"><use href="#tick"/></svg></td></tr>
          <tr><td><div class="node dimmed"><svg class="br" width="35" height="18"><path d="M26.500 0v18M27 9.500h9"/></svg><input type="checkbox" checked aria-label="草图"><svg width="14" height="14" viewBox="0 0 14 14" fill="none" stroke="#222" stroke-width="1.200"><path d="M1 1h4v5H1zM1 9h5v4H1zM8 5h5v8H8z"/><path d="M9 4l4-4" stroke="#d0a020" stroke-width="2"/></svg>草图 (1) "SKETCH_000"</div></td><td><svg width="14" height="14"><use href="#tick"/></svg></td></tr>
          <tr><td><div class="node strong"><svg class="br" width="35" height="18"><path d="M26.500 0v9M27 9.500h9"/></svg><input type="checkbox" checked aria-label="拉伸"><svg width="14" height="14" viewBox="0 0 14 14"><path d="M1 3l4-2 8 1v9l-4 2H1z" fill="#f0a428" stroke="#8c4c10"/><path d="M5 1v11M9 3v10" stroke="#a86410"/></svg>拉伸 (2)</div></td><td><svg width="14" height="14"><use href="#tick"/></svg></td></tr>
          <tr><td></td><td></td></tr><tr><td></td><td></td></tr><tr><td></td><td></td></tr><tr><td></td><td></td></tr><tr><td></td><td></td></tr><tr><td></td><td></td></tr><tr><td></td><td></td></tr>
          <tr><td></td><td></td></tr><tr><td></td><td></td></tr><tr><td></td><td></td></tr><tr><td></td><td></td></tr><tr><td></td><td></td></tr><tr><td></td><td></td></tr><tr><td></td><td></td></tr>
        </tbody>
      </table>
      </div>
      <div class="hscroll"><svg width="6" height="8" viewBox="0 0 6 8"><path d="M5 1L1 4l4 3"/></svg><div class="track"><div class="thumb"></div></div><svg width="6" height="8" viewBox="0 0 6 8"><path d="M1 1l4 3-4 3"/></svg></div>
    </div>
  </section>

  <section class="view">
    <svg class="scene" viewBox="372 173 908 488" preserveAspectRatio="xMidYMid meet">
      <path d="M671 305l365 18 14 113-72 149-365-17-13-112z" fill="#ffc107"/>
      <path d="M600 456l365 16 13 113-365-17z" fill="#7b4200"/>
      <path d="M965 472l71-149 14 113-72 149z" fill="#dc7800"/>
      <path d="M671 305l365 18 14 113-72 149-365-17-13-112zM600 456l365 16 71-149M965 472l13 113" fill="none" stroke="#4d3300"/>
      <g fill="url(#gHole)" stroke="#6b4200">
        <ellipse cx="732" cy="341" rx="40" ry="21" transform="rotate(-5 732 341)"/>
        <ellipse cx="820" cy="406" rx="43" ry="22" transform="rotate(-6 820 406)"/>
        <ellipse cx="903" cy="449" rx="22" ry="11" transform="rotate(-5 903 449)"/>
      </g>
      <circle cx="533" cy="479" r="26" fill="#eff08a"/>
      <circle cx="533" cy="479" r="11" fill="none" stroke="#333" stroke-width="1.500" stroke-dasharray="11 6.280" stroke-dashoffset="-3"/>
      <path d="M532.500 465.500h2v13h13v2h-13v13h-2v-13h-13v-2h13z" fill="#fff" stroke="#111"/>
      <path d="M417 592l17-1 3 6v14l-4 4h-16z" fill="#ccd4d2" stroke="#a8b0ae"/><path d="M418 603h17M424 592l4 22M418 612l16-19" stroke="#a8b0ae" fill="none"/>
      <path d="M414 615l-2-19" stroke="#1a2ca0" stroke-width="2"/><path d="M412 590l3 8h-6z" fill="#1a2ca0"/>
      <path d="M418 616l18 1" stroke="#b82c34" stroke-width="2"/><path d="M442 617l-8 3v-6z" fill="#b82c34"/><circle cx="415" cy="616" r="3" fill="#b8b8a8"/>
      <text x="408" y="592" font-size="10" fill="#3048b0">Z</text><text x="444" y="621" font-size="11" fill="#c04850">X</text>
    </svg>
    <div class="net"><span class="ball">59%</span><span class="rates"><span><b class="upc">↑</b>0.03K/s</span><span><b class="dnc">↓</b>0K/s</span></span><svg width="18" height="20" viewBox="0 0 18 20"><circle cx="8" cy="11" r="8" fill="#2f6cb8"/><path d="M8 7v8M4 11h8" stroke="#fff" stroke-width="2"/><circle cx="14" cy="5" r="4" fill="#e02828"/></svg></div>
    <div class="ime"><svg width="28" height="22" viewBox="0 0 28 22"><circle cx="22" cy="12" r="6" fill="#a81c24"/><circle cx="12" cy="11" r="10" fill="#17466c"/><circle cx="18" cy="18" r="4" fill="#f0d028"/><text x="5" y="16" font-size="13" fill="#b8e4f8">搜</text></svg><b>英</b><i>〉</i></div>
    <div class="mark"><strong>激活 Windows</strong><span>转到"电脑设置"以激活 Windows。</span></div>
  </section>
</main>

<div class="status"><span>选择对象并使用 MB3，或者双击某一对象</span>
  <button class="ib w18" aria-label="提示"><svg width="15" height="15" viewBox="0 0 15 15"><path d="M1 1h13v13H1z" fill="#e4e4e4" stroke="#aaa"/><path d="M2 11l3-7 3 7 2-7 3 7M3 6h9" stroke="#999" fill="none"/></svg></button><button class="ib w18" aria-label="全屏显示"><svg width="15" height="15"><use href="#fit"/></svg></button></div>

<footer class="taskbar">
  <button class="app" aria-label="开始"><svg width="26" height="24" viewBox="0 0 26 24" fill="#fff"><path d="M0 4l11-2v9H0zM12 2l14-2v11H12zM0 12h11v9L0 20zM12 12h14v12l-14-2z"/></svg></button>
  <button class="app" aria-label="浏览器"><svg width="30" height="28" viewBox="0 0 30 28"><circle cx="9" cy="8" r="7.500" fill="#78b82c"/><circle cx="21" cy="8" r="7.500" fill="#3a8ad0"/><circle cx="9" cy="20" r="7.500" fill="#f4b01c"/><circle cx="21" cy="20" r="7.500" fill="#dd4434"/></svg></button>
  <button class="app" aria-label="Internet Explorer"><svg width="28" height="28" viewBox="0 0 28 28"><circle cx="14" cy="14" r="14" fill="#fff"/><circle cx="14" cy="14" r="8.500" fill="none" stroke="#3a90e0" stroke-width="5"/><path d="M7 13h18v3H7z" fill="#3a90e0"/><path d="M15 17h12v3H15z" fill="#fff"/><path d="M2 20C8 20 19 13 25 7" fill="none" stroke="#fff" stroke-width="1.500"/></svg></button>
  <button class="task cur"><svg width="28" height="28" viewBox="0 0 28 28"><circle cx="13" cy="15" r="11" fill="url(#gNx)"/><path d="M2 3l14-3-2 14z" fill="#c41830"/><path d="M14 14L16 0l3 4z" fill="#701020"/><path d="M3 24c9 6 24-4 23-16 3-2 2 14-9 19-6 2-12 0-14-3z" fill="#f0b020"/></svg><span>NX 11 - 建模 - [_...</span></button>
  <button class="task"><svg width="28" height="28" viewBox="0 0 28 28"><circle cx="14" cy="14" r="14" fill="#f58a30"/><path d="M6 9h16v12H6z" fill="#fff"/><path d="M11 9V6h6v3" fill="none" stroke="#fff" stroke-width="2"/><path d="M6 14h16" stroke="#f58a30"/><path d="M12 13h4v3h-4z" fill="#f58a30"/></svg><span>UG技术基础2018...</span></button>
  <span class="spin"><i class="caret up"></i><i class="caret"></i></span>
  <div class="tray">
    <svg viewBox="0 0 16 16"><path d="M1 1h14v14H1z" fill="#e8e0f0" stroke="#536"/><path d="M2 13L12 2M4 3l8 9" stroke="#6040a0" stroke-width="2"/><circle cx="12" cy="12" r="3" fill="#c02030"/></svg>
    <svg viewBox="0 0 16 16"><path d="M3 0h10v16H3z" fill="#203010"/><path d="M4 2h8v12H4z" fill="#8cd828"/><path d="M4 5h8M4 8h8M4 11h8" stroke="#4c8c18"/></svg>
    <svg viewBox="0 0 16 16"><path d="M2 1l13 7-13 7z" fill="#3cb060"/><path d="M2 1l5 7-5 7z" fill="#2e8fe0"/><path d="M7 8l8 0-6 4z" fill="#f0d030"/></svg>
    <svg viewBox="0 0 16 16" fill="none" stroke="#eee" stroke-width="1.500"><circle cx="6" cy="9" r="4"/><circle cx="11" cy="8" r="4"/></svg>
    <svg viewBox="0 0 16 16" fill="none" stroke="#fff"><path d="M1 6h3l4-4v12l-4-4H1z" fill="#ddd"/><path d="M10 5c2 2 2 4 0 6M12 3c3 3 3 7 0 10" stroke-width="1.400"/></svg>
    <svg viewBox="0 0 16 16"><circle cx="8" cy="8" r="4" fill="none" stroke="#7a5c98" stroke-width="2"/><path d="M8 1v4M8 11v4M1 8h4M11 8h4" stroke="#7a5c98" stroke-width="2"/></svg>
    <svg viewBox="0 0 16 16"><circle cx="7" cy="9" r="7" fill="#2faa50"/><path d="M3 9c1-5 7-5 8-1s-4 5-5 2 2-3 2-1" fill="none" stroke="#fff" stroke-width="1.500"/><path d="M9 0h7v6H9z" fill="#c42020"/></svg>
    <svg viewBox="0 0 16 16"><path d="M0 1h16v14H0z" fill="#1680c8"/><path d="M2 3h3v3H2zM2 9h3v3H2zM7 3h7v3H7zM7 9h7v3H7z" fill="#fff"/></svg>
    <svg viewBox="0 0 16 16"><circle cx="8" cy="8" r="7" fill="#fff" stroke="#c02828" stroke-width="2"/><path d="M5 5c3-4 6 0 3 3s-1 5 3 3M5 9v3" fill="none" stroke="#c02828" stroke-width="2"/></svg>
    <svg viewBox="0 0 16 16"><circle cx="6" cy="6" r="5" fill="#5cc83c"/><circle cx="11" cy="10" r="4.500" fill="#f4f4f4"/></svg>
    <svg viewBox="0 0 16 16"><path d="M8 0l6 2v6c0 4-3 6-6 8-3-2-6-4-6-8V2z" fill="#3da04c" stroke="#e4f4e4"/><path d="M5 7h3V4h3L7 12V9H5z" fill="#fff"/></svg>
    <svg viewBox="0 0 16 16"><circle cx="8" cy="8" r="7" fill="#f4dc20" stroke="#4c9820" stroke-width="2"/><path d="M8 4v8M4 8h8" stroke="#186818" stroke-width="2.500"/></svg>
    <svg viewBox="0 0 16 16" fill="none" stroke="#fff" stroke-width="1.500"><path d="M7 2h7v12H7zM1 4h4v5H1zM3 9v5h3"/><path d="M9 5h3v6H9z" fill="#333" stroke="none"/></svg>
    <svg viewBox="0 0 16 16"><ellipse cx="8" cy="8" rx="5" ry="7" fill="#1c1c1c"/><ellipse cx="8" cy="10" rx="3" ry="4" fill="#fff"/><path d="M3 8h10v2H3z" fill="#d82820"/><circle cx="12" cy="12" r="3" fill="#f0a020"/></svg>
    <svg viewBox="0 0 16 16"><path d="M1 1h14v11H1z" fill="#4c4a60" stroke="#ccc"/><path d="M1 14h6v2H1zM9 14h6v2H9z" fill="#222"/></svg>
    <svg viewBox="0 0 16 16"><path d="M2 2h12v10H2z" fill="#f0f0f0" stroke="#777"/><path d="M4 6h3v4H4zM9 6h3v4H9z" fill="#687080"/><path d="M2 3h12" stroke="#555" stroke-width="2"/></svg>
    <svg viewBox="0 0 16 16"><path d="M2 3h5v8H2z" fill="#555"/><circle cx="10" cy="10" r="6" fill="#2c9c3c"/><path d="M7 10l2 3 4-5" fill="none" stroke="#fff" stroke-width="1.500"/></svg>
    <svg viewBox="0 0 16 16" fill="#fff" stroke="#444" stroke-width=".5"><path d="M1 12h2v3H1zM4 10h2v5H4zM7 7h2v8H7zM10 4h2v11h-2zM13 1h2v14h-2z"/></svg>
    <svg viewBox="0 0 16 16"><circle cx="8" cy="8" r="7" fill="#b48c58" stroke="#eee" stroke-width="1.500"/><path d="M5 5l6 6M11 5l-6 6" stroke="#fff" stroke-width="2"/></svg>
    <svg viewBox="0 0 16 16"><circle cx="8" cy="8" r="7.500" fill="#123c64"/><path d="M4 5h8M8 3v9M5 8h7M5 12l3-2" stroke="#a8dcf4" stroke-width="1.500"/><circle cx="13" cy="13" r="2.500" fill="#f09820"/></svg>
  </div>
  <div class="time"><span>下午 3:52</span><span>2018-04-02</span></div>
</footer>
</body>
</html>
```
FILE: styles.css
```css
* { box-sizing: border-box; }
html, body { height: 100%; }
body {
  margin: 0;
  display: flex;
  flex-direction: column;
  overflow: hidden;
  background: #fcfcfc;
  color: #333;
  font-family: "Noto Sans", "Noto Sans CJK SC", sans-serif;
  font-size: 10px;
  line-height: 16px;
}
.defs { position: absolute; }
button { margin: 0; padding: 0; border: 0; background: none; font: inherit; color: inherit; }
svg { flex: none; display: block; }
h1, h2 { margin: 0; font-weight: normal; }

.caret {
  flex: none;
  width: 0;
  height: 0;
  border: 3px solid transparent;
  border-top-color: #222;
  border-bottom-width: 0;
}
.caret.up { border-top-width: 0; border-bottom: 3px solid #222; }
.caret.dim { opacity: .5; }
.caret.bar { position: relative; }
.caret.bar::before { content: ""; position: absolute; left: -3px; top: -6px; width: 6px; height: 1px; background: #222; }
.caret.up.bar::before { top: 5px; }
.sep { flex: none; width: 1px; height: 18px; background: #dcdcdc; }
.ib { flex: none; display: flex; align-items: center; justify-content: center; height: 24px; }
.w16 { width: 16px; } .w18 { width: 18px; } .w22 { width: 22px; } .w24 { width: 24px; } .w28 { width: 28px; }
.min { width: 8px; height: 2px; background: #222; margin-top: 8px; }
.tb { display: flex; align-items: center; gap: 4px; white-space: nowrap; }

/* title bar */
.titlebar { flex: none; display: flex; align-items: center; height: 28px; padding: 0 4px 0 2px; color: #333; }
.logo { width: 40px; border-right: 1px solid #ddd; font: bold 22px/22px "Liberation Sans", sans-serif; color: #788c94; }
.titlebar .sep { margin: 0 2px; }
.titlebar > .caret { margin: 0 3px; }
.titlebar .tb { margin: 0 9px 0 3px; }
.titlebar .tb + .tb { margin: 0 3px 0 0; }
.doc-title { flex: 1; padding-right: 10px; text-align: center; font-size: 15px; line-height: 24px; white-space: nowrap; color: #222; }
.brand { font: bold 14px/20px "Noto Sans", sans-serif; color: #00878a; margin-right: 19px; }
.winbtns { display: flex; }

/* tab row */
.tabs { flex: none; display: flex; align-items: center; height: 26px; padding-right: 9px; background: #d8d8d8; color: #222; }
.tab { width: 49px; height: 26px; font-size: 12px; }
.tab.file { width: 74px; padding-right: 4px; background: #3c98ac; color: #fff; }
.tab.on { width: 51px; background: #fcfcfc; color: #156f92; }
.tab.wide { width: 68px; }
.search { margin-left: auto; display: flex; align-items: center; width: 118px; height: 19px; padding: 0 2px; background: #fff; border: 1px solid #aaa; }
.search input { flex: 1; min-width: 0; padding: 0; border: 0; outline: 0; font: inherit; background: none; }
.search input::placeholder { color: #999; opacity: 1; }
.tabicons { display: flex; margin-left: 6px; color: #111; }

/* ribbon */
.ribbon { flex: none; display: flex; height: 88px; border-bottom: 1px solid #d6d6d6; }
.group { position: relative; flex: none; display: flex; flex-direction: column; padding-top: 4px; }
.group:not(.gend)::after { content: ""; position: absolute; right: 0; top: 2px; bottom: 6px; width: 1px; background: #ddd; }
.group footer { display: flex; align-items: center; justify-content: center; padding-right: 7px; margin-top: auto; height: 17px; margin-bottom: 1px; color: #1a6c88; white-space: nowrap; }
.group footer span { flex: 1; text-align: center; }
.g1 { width: 165px; } .g2 { width: 346px; } .g3 { width: 161px; } .g4 { width: 40px; } .g5 { width: 97px; }
.g6 { width: 55px; } .g7 { width: 48px; } .g8 { width: 93px; } .g9 { width: 169px; } .gend { flex: 1; }
.group.gend footer { justify-content: flex-end; }
.tools { display: flex; align-items: flex-start; }
.g1 .tools { padding-left: 2px; }
.g2 .tools { padding-left: 9px; }
.g3 .tools { padding-left: 3px; }
.g9 .tools { padding-left: 9px; }
.big { display: flex; flex-direction: column; align-items: center; width: 46px; padding-top: 2px; white-space: nowrap; }
.big > span:not(.box) { margin-top: 4px; }
.big .caret { margin-top: 4px; }
.big:disabled { color: #bbb; }
.w40 { width: 40px; } .w36 { width: 36px; } .w34 { width: 34px; }
.more { width: 34px; padding-top: 0; }
.box { display: flex; align-items: center; justify-content: center; width: 34px; height: 33px; border: 1px solid #dedede; border-radius: 2px; }
.more > span:not(.box) { margin-top: 1px; }
.gallery { display: grid; grid-template-columns: 1fr 1fr 1fr; width: 92px; height: 62px; margin: 1px 0 0 4px; border: 1px solid #ccc; }
.gallery button { display: flex; align-items: center; justify-content: center; }
.scroll { display: flex; flex-direction: column; align-items: center; justify-content: space-between; height: 46px; margin: 9px 0 0 5px; }
.stack { width: 66px; margin: -2px 0 0 8px; }
.stack.s54 { width: 54px; margin: -2px 7px 0 6px; }
.stack.s66 { width: 62px; margin: -2px 10px 0 0; }
.stack.last { margin-left: 4px; }
.stack button { display: flex; align-items: center; gap: 3px; height: 20px; white-space: nowrap; }
.stack button svg { height: 14px; }
.stack .caret { margin-left: 5px; }
.tools.grid2, .tools.grid4 { display: grid; grid-template-columns: 22px 22px; grid-auto-rows: 28px; align-items: stretch; padding: 3px 0 0 4px; }
.tools.grid4 { grid-template-columns: 22px 22px 22px 24px; }
.grid2 button, .grid4 button { display: flex; align-items: center; justify-content: center; }
.split { border-left: 1px solid #ddd; }
.h7 { flex-direction: column; }
.h7 b { font-size: 7px; line-height: 7px; }

/* selection bar */
.selbar { flex: none; display: flex; align-items: center; height: 31px; padding-left: 7px; border-bottom: 2px solid #a4a8a8; }
.menu { width: 72px; gap: 3px; font-size: 11px; }
.menu .caret { margin-left: 1px; }
.dd { position: relative; height: 18px; }
.d1 { width: 124px; margin: 0 9px 0 11px; }
.d2 { width: 131px; }
.dd select { display: block; appearance: none; width: 100%; height: 18px; padding: 0 2px; border: 1px solid #999; border-radius: 0; background: #fff; color: #222; font: inherit; line-height: 16px; }
.dd .caret { position: absolute; right: 5px; top: 8px; pointer-events: none; }
.run { display: flex; align-items: center; gap: 1px; margin-right: 2px; }
.run.first { margin: 0 3px 0 4px; }
.run.first .caret { margin: 0 2px 0 1px; }
.run button { display: flex; align-items: center; justify-content: center; width: 22px; height: 20px; }
.run button.hot { background: #bde0e6; }
.run .c12 { margin: 0 3px; }
.sep.gap { margin: 0 7px 0 4px; }
.caret.end { margin: 8px 7px 0 auto; }

/* work area */
.work { flex: 1; min-height: 0; display: flex; border-bottom: 1px solid #9aa0a0; }
.rail { flex: none; display: flex; flex-direction: column; align-items: center; width: 28px; background: #d6d6d6; border-right: 1px solid #b0b0b0; }
.rail button { flex: none; display: flex; align-items: center; justify-content: center; width: 27px; height: 39px; }
.rail .gear { height: 23px; margin-bottom: 16px; padding-right: 3px; }
.rail .on { background: #fff; }
.rail .tall { height: 51px; }
.rail button:not(.tall) + .tall { margin-top: 7px; }
.rail .role { height: 34px; margin-bottom: 5px; }
.rail .caret { margin: 0 3px 12px 0; }
.panel { flex: none; display: flex; flex-direction: column; width: 344px; padding: 0 9px 4px 7px; border-right: 1px solid #888; }
.panel header { display: flex; align-items: center; justify-content: space-between; height: 27px; padding: 0 3px 0 2px; }
.panel h2 { font-size: 11px; }
.max { width: 11px; height: 10px; border: 1px solid #222; border-top-width: 2px; }
.tree { flex: 1; min-height: 0; display: flex; flex-direction: column; border: 1px solid #ddd; border-bottom: 4px solid #c8c8c8; }
.rows { flex: 1; min-height: 0; overflow: hidden; }
.tree table { width: 100%; border-collapse: collapse; table-layout: fixed; font-size: 11px; line-height: 16px; }
.c2 { width: 37px; }
.tree th { height: 19px; padding: 0 5px; text-align: left; font-weight: normal; background: #f2f2f2; white-space: nowrap; }
.tree th .caret { display: inline-block; margin-left: 17px; border-width: 0 4px 4px; vertical-align: 2px; }
.tree td, .tree th { border-bottom: 1px solid #e6e6e6; border-right: 1px solid #e6e6e6; }
.tree td { height: 19px; padding: 0; }
.tree td > svg { margin-left: 5px; }
.node { display: flex; align-items: center; gap: 2px; height: 18px; white-space: nowrap; }
.br { margin-right: -2px; fill: none; stroke: #bbb; stroke-dasharray: 1 1; }
.br .pm { stroke: #222; stroke-dasharray: none; }
.dimmed { color: #999; }
.strong { font-weight: bold; color: #222; }
.node input { appearance: none; flex: none; width: 12px; height: 12px; margin: 0 0 0 3px; border: 1px solid #222; background: #fff; position: relative; }
.node input:checked::after { content: ""; position: absolute; left: 3px; top: 0; width: 3px; height: 6px; border: solid #12a53c; border-width: 0 2px 2px 0; transform: rotate(40deg); }
.hscroll { flex: none; display: flex; align-items: center; gap: 6px; height: 17px; padding: 0 5px; margin-bottom: 3px; background: #f0f0f0; }
.hscroll svg { fill: none; stroke: #333; stroke-width: 2; }
.track { flex: 1; height: 14px; }
.thumb { width: 69%; height: 14px; background: #c4c4c4; }

/* graphics view */
.view { position: relative; flex: 1; min-width: 0; overflow: hidden; background: linear-gradient(#a8abab 0%, #b2b2b2 12%, #bcbcbf 24%, #c5c6c7 36%, #cecfd0 48%, #d8d8da 60%, #dedfe2 73%, #dfe7e5 76%, #dde8e4 100%); }
.scene { width: 100%; height: 100%; }
.net { position: absolute; top: 57px; right: 33px; display: flex; align-items: center; width: 113px; height: 34px; padding-right: 4px; border-radius: 17px; background: linear-gradient(#f8f8f8, #d8d8da); box-shadow: 1px 3px 6px #6668; color: #222; font-size: 9px; }
.ball { flex: none; width: 44px; height: 44px; margin-left: -6px; border: 2px solid #e4f0e4; border-radius: 50%; background: linear-gradient(#188050 0 40%, #30c848 41%); box-shadow: 0 1px 3px #333; color: #e8f8e8; font-size: 13px; line-height: 38px; text-align: center; }
.rates { flex: 1; line-height: 14px; }
.rates > span { display: flex; justify-content: space-between; margin: 0 4px; }
.upc { color: #d03c28; } .dnc { color: #2c8c3c; }
.ime { position: absolute; top: 207px; right: 94px; display: flex; align-items: center; width: 61px; height: 23px; padding-left: 3px; background: #f2f4f6; box-shadow: 3px 3px 2px #777; }
.ime b { margin-left: 2px; font-size: 16px; color: #2468b8; }
.ime i { font-style: normal; color: #aaa; }
.mark { position: absolute; right: 56px; bottom: 8px; display: flex; flex-direction: column; color: #9aa3a1; white-space: nowrap; font-size: 14px; line-height: 22px; }
.mark strong { font-size: 19px; line-height: 24px; font-weight: normal; }

.status { flex: none; display: flex; align-items: center; height: 21px; padding: 0 52px 0 1px; color: #111; font-weight: bold; }
.status span { margin-right: auto; }

/* taskbar */
.taskbar { flex: none; display: flex; align-items: center; height: 37px; border-top: 1px solid #77603c; background: linear-gradient(90deg, #a9741f 0, #b27c22 36%, #b8801e 38%, #b06a1e 46%, #8c6c30 49%, #8a6a34 54%, #7c5f2c 55%, #b59a78 56%, #b99c78 84%, #c29a50 87%, #b98a1c 92%, #b07e14 100%); color: #fff; }
.app { display: flex; align-items: center; justify-content: center; width: 56px; }
.app:first-child { width: 44px; }
.task { display: flex; align-items: center; gap: 6px; width: 149px; height: 36px; margin-left: 3px; padding-left: 8px; border: 1px solid #cba878; background: #bd935a; font-size: 12px; white-space: nowrap; }
.app + .task { margin-left: 5px; }
.task.cur { border: 1px solid #f6e4c0; background: #c6a272; }
.spin { display: flex; flex-direction: column; align-items: center; justify-content: space-between; width: 15px; height: 36px; margin-left: auto; padding: 5px 0; border: 1px solid #f0dca8; background: #dcc488; }
.spin .caret { opacity: .6; }
.tray { display: flex; justify-content: space-between; width: 451px; margin-left: 5px; }
.tray svg { width: 17px; height: 17px; }
.time { display: flex; flex-direction: column; align-items: center; width: 102px; font-size: 12px; line-height: 17px; }
```
